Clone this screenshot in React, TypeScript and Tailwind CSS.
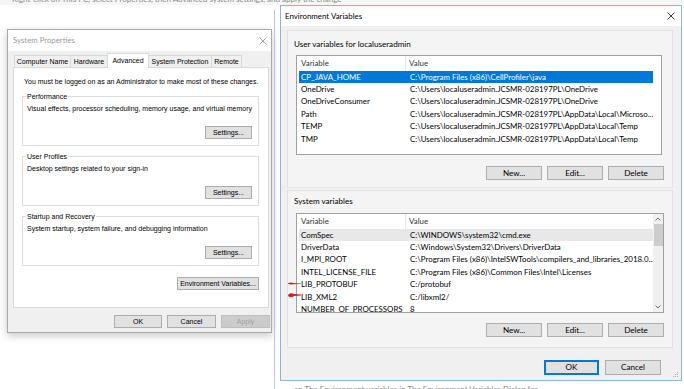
import { ReactNode } from "react";

interface EnvVar {
    name: string;
    value: string;
}

const userVars: EnvVar[] = [
    { name: "CP_JAVA_HOME", value: "C:\\Program Files (x86)\\CellProfiler\\java" },
    { name: "OneDrive", value: "C:\\Users\\localuseradmin.JCSMR-028197PL\\OneDrive" },
    { name: "OneDriveConsumer", value: "C:\\Users\\localuseradmin.JCSMR-028197PL\\OneDrive" },
    { name: "Path", value: "C:\\Users\\localuseradmin.JCSMR-028197PL\\AppData\\Local\\Microso..." },
    { name: "TEMP", value: "C:\\Users\\localuseradmin.JCSMR-028197PL\\AppData\\Local\\Temp" },
    { name: "TMP", value: "C:\\Users\\localuseradmin.JCSMR-028197PL\\AppData\\Local\\Temp" },
];

const systemVars: EnvVar[] = [
    { name: "ComSpec", value: "C:\\WINDOWS\\system32\\cmd.exe" },
    { name: "DriverData", value: "C:\\Windows\\System32\\Drivers\\DriverData" },
    { name: "I_MPI_ROOT", value: "C:\\Program Files (x86)\\IntelSWTools\\compilers_and_libraries_2018.0..." },
    { name: "INTEL_LICENSE_FILE", value: "C:\\Program Files (x86)\\Common Files\\Intel\\Licenses" },
    { name: "LIB_PROTOBUF", value: "C:/protobuf" },
    { name: "LIB_XML2", value: "C:/libxml2/" },
    { name: "NUMBER_OF_PROCESSORS", value: "8" },
];

const tabs = [
    { label: "Computer Name", width: "w-[57px]" },
    { label: "Hardware", width: "w-[38px]" },
    { label: "Advanced", width: "w-[42px]" },
    { label: "System Protection", width: "w-[64px]" },
    { label: "Remote", width: "w-[31px]" },
];

const CloseIcon = ({ color }: { color: string }) => (
    <svg width="8" height="8" viewBox="0 0 8 8">
        <path d="M0.5 0.5 L7.5 7.5 M7.5 0.5 L0.5 7.5" stroke={color} strokeWidth="0.9" />
    </svg>
);

interface ButtonProps {
    children: ReactNode;
    className: string;
}

// plain win10 push button
const Button = function (props: ButtonProps) {
    return (
        <div
            className={`flex items-center justify-center whitespace-nowrap border border-[#adadad] bg-[#e1e1e1] ${props.className}`}
        >
            {props.children}
        </div>
    );
};

interface GroupBoxProps {
    label: string;
    text: string;
}

const GroupBox = function (props: GroupBoxProps) {
    return (
        <div className="ml-[8px] flex h-[50px] w-[237px] flex-col border border-[#dcdcdc] px-[3px]">
            <div className="-mt-[5px] w-fit whitespace-nowrap bg-white px-[1px]">{props.label}</div>
            <div className="mt-[3px] whitespace-nowrap pl-[1px]">{props.text}</div>
            <div className="mt-[13px] flex justify-end pr-[3px]">
                <Button className="h-[13px] w-[47px]">Settings...</Button>
            </div>
        </div>
    );
};

const SystemProperties = function () {
    return (
        <div className="flex w-[265px] flex-col border border-[#a9a9a9] bg-[#f0f0f0] shadow-[0_3px_8px_rgba(0,0,0,0.22)]">
            <div className="flex h-[21px] items-center justify-between bg-white pl-[5px] pr-[4px] text-[7.8px] text-[#9a9a9a]">
                <span>System Properties</span>
                <CloseIcon color="#9a9a9a" />
            </div>
            <div className="flex flex-col font-['Liberation_Sans',sans-serif] text-[7px]">
                <div className="flex flex-col pl-[5px] pt-[2px]">
                    <div className="flex h-[14px] items-end pl-[1px]">
                        {tabs.map((tab, index) => {
                            if (tab.label === "Advanced")
                                return (
                                    <div
                                        key={tab.label}
                                        className={`relative z-10 -mb-px -ml-px flex h-[15px] items-start justify-center whitespace-nowrap border border-b-0 border-[#d9d9d9] bg-white pt-[2px] ${tab.width}`}
                                    >
                                        {tab.label}
                                    </div>
                                );
                            return (
                                <div
                                    key={tab.label}
                                    className={`flex h-[12px] items-center justify-center whitespace-nowrap border border-b-0 border-[#d9d9d9] bg-[#f0f0f0] ${index === 0 ? "" : "-ml-px"} ${tab.width}`}
                                >
                                    {tab.label}
                                </div>
                            );
                        })}
                    </div>
                    <div className="flex h-[241px] w-[256px] flex-col border border-[#d9d9d9] bg-white pt-[9px]">
                        <div className="whitespace-nowrap pl-[10px]">
                            You must be logged on as an Administrator to make most of these changes.
                        </div>
                        <div className="mt-[10px] flex flex-col gap-[10px]">
                            <GroupBox
                                label="Performance"
                                text="Visual effects, processor scheduling, memory usage, and virtual memory"
                            />
                            <GroupBox label="User Profiles" text="Desktop settings related to your sign-in" />
                            <GroupBox
                                label="Startup and Recovery"
                                text="System startup, system failure, and debugging information"
                            />
                        </div>
                        <div className="mt-[11px] flex justify-end pr-[9px]">
                            <Button className="h-[13px] w-[82px]">Environment Variables...</Button>
                        </div>
                    </div>
                </div>
                <div className="flex justify-end gap-[5px] pb-[4px] pr-[1px] pt-[7px]">
                    <Button className="h-[13px] w-[48px]">OK</Button>
                    <Button className="h-[13px] w-[49px]">Cancel</Button>
                    <div className="flex h-[13px] w-[49px] items-center justify-center border border-[#bfbfbf] bg-[#cccccc] text-[#a3a3a3]">
                        Apply
                    </div>
                </div>
            </div>
        </div>
    );
};

const Chevron = ({ up }: { up: boolean }) => (
    <svg width="6" height="4" viewBox="0 0 6 4">
        <path
            d={up ? "M0.5 3.5 L3 1 L5.5 3.5" : "M0.5 0.5 L3 3 L5.5 0.5"}
            stroke="#606060"
            strokeWidth="0.9"
            fill="none"
        />
    </svg>
);

interface ListViewProps {
    rows: EnvVar[];
    selected?: number;
    hover?: number;
    scroll?: boolean;
}

const ListView = function (props: ListViewProps) {
    return (
        <div className="flex h-[100px] overflow-hidden border border-[#a0a0a0] bg-white text-[7.9px]">
            <div className="flex flex-1 flex-col overflow-hidden">
                <div className="flex h-[15px] shrink-0 items-center text-[#333]">
                    <div className="flex h-full w-[109px] shrink-0 items-center border-r border-[#e5e5e5] pl-[4px]">
                        Variable
                    </div>
                    <div className="pl-[3px]">Value</div>
                </div>
                {props.rows.map((row, index) => {
                    let tone = "";
                    if (index === props.selected) tone = "bg-[#0078d7] text-white";
                    else if (index === props.hover) tone = "bg-[#e8e8e8]";
                    return (
                        <div
                            key={row.name}
                            className={`ml-[2px] flex h-[12.4px] w-[354px] shrink-0 items-center ${tone}`}
                        >
                            <div className="w-[111px] shrink-0 whitespace-nowrap pl-[2px]">{row.name}</div>
                            <div className="shrink-0 whitespace-nowrap">{row.value}</div>
                        </div>
                    );
                })}
            </div>
            {props.scroll && (
                <div className="flex w-[10px] shrink-0 flex-col items-center bg-[#f0f0f0]">
                    <div className="flex h-[10px] items-center">
                        <Chevron up={true} />
                    </div>
                    <div className="h-[22px] w-[9px] bg-[#cdcdcd]" />
                    <div className="flex-1" />
                    <div className="flex h-[10px] items-center">
                        <Chevron up={false} />
                    </div>
                </div>
            )}
        </div>
    );
};

const ListButtons = () => (
    <div className="flex justify-end gap-[5px]">
        <Button className="h-[14px] w-[56px]">New...</Button>
        <Button className="h-[14px] w-[56px]">Edit...</Button>
        <Button className="h-[14px] w-[56px]">Delete</Button>
    </div>
);

const RedMarks = () => (
    <svg className="absolute left-[-8px] top-[68px]" width="14" height="18" viewBox="0 0 14 18">
        <path d="M0 2.2 C2 1.2 4 1.4 5 2 L13 2.4 L13 3 L5 3.2 C4 3.8 2 3.6 0 2.8 Z" fill="#d11f1f" />
        <path d="M0 14.5 C1 11.8 4 11.6 6 13 L13 13.6 L13 14.4 L6 15 C4 16.6 1 16.8 0 14.5 Z" fill="#d11f1f" />
    </svg>
);

const EnvironmentVariables = function () {
    return (
        <div className="relative flex h-[376px] w-[402px] flex-col border border-[#8fb3dd] bg-[#f0f0f0] text-[8.1px]">
            <div className="flex h-[20px] shrink-0 items-center justify-between bg-white pl-[4px] pr-[6px] text-[7.9px]">
                <span>Environment Variables</span>
                <CloseIcon color="#222" />
            </div>
            <div className="ml-[6px] mt-[4px] flex w-[386px] flex-col border border-[#e2e2e2] bg-[#f4f4f4] pb-[7px] pl-[8px] pr-[8px] pt-[9px]">
                <div className="-ml-[2px]">User variables for localuseradmin</div>
                <div className="mr-[2px] mt-[6px]">
                    <ListView rows={userVars} selected={0} />
                </div>
                <div className="mt-[11px]">
                    <ListButtons />
                </div>
            </div>
            <div className="ml-[6px] mt-[2px] flex w-[386px] flex-col border border-[#e2e2e2] bg-[#f4f4f4] pb-[10px] pl-[8px] pr-[8px] pt-[6px]">
                <div className="-ml-[2px]">System variables</div>
                <div className="relative mt-[7px]">
                    <ListView rows={systemVars} hover={0} scroll={true} />
                    <RedMarks />
                </div>
                <div className="mt-[10px]">
                    <ListButtons />
                </div>
            </div>
            <div className="mt-[12px] flex justify-end gap-[6px] pr-[20px]">
                <div className="flex h-[15px] w-[55px] items-center justify-center border border-[#0078d7] bg-[#e1e1e1] shadow-[inset_0_0_0_1px_#0078d7]">
                    OK
                </div>
                <Button className="h-[15px] w-[56px]">Cancel</Button>
            </div>
            <svg className="absolute bottom-[2px] right-[2px]" width="6" height="6" viewBox="0 0 6 6">
                <rect x="4" y="0" width="1" height="1" fill="#b0b0b0" />
                <rect x="2" y="2" width="1" height="1" fill="#b0b0b0" />
                <rect x="4" y="2" width="1" height="1" fill="#b0b0b0" />
                <rect x="0" y="4" width="1" height="1" fill="#b0b0b0" />
                <rect x="2" y="4" width="1" height="1" fill="#b0b0b0" />
                <rect x="4" y="4" width="1" height="1" fill="#b0b0b0" />
            </svg>
        </div>
    );
};

export default function App() {
    return (
        <div className="flex h-[389px] w-[684px] flex-col overflow-hidden bg-white font-['Lato',sans-serif] text-[7.5px] leading-[9px] text-black">
            <div className="h-[5px] shrink-0 overflow-hidden bg-[#f6f6f6]">
                <div className="-mt-[5px] whitespace-nowrap pl-[12px] text-[8px] text-[#8a8a8a]">
                    Right-click on This PC, select Properties, then Advanced system settings, and apply the change
                </div>
            </div>
            <div className="flex flex-1">
                <div className="flex w-[274px] flex-col pl-[7px] pt-[24px]">
                    <SystemProperties />
                </div>
                <div className="mt-[5px] w-px bg-[#b7c8dc]" />
                <div className="ml-[5px] flex flex-col">
                    <EnvironmentVariables />
                    <div className="h-[8px] overflow-hidden">
                        <div className="whitespace-nowrap pl-[14px] pt-[4px] text-[8px] text-[#8a8a8a]">
                            an  The Environment  variables  in  The Environment  Variables  Dialog  for
                        </div>
                    </div>
                </div>
            </div>
        </div>
    );
}
